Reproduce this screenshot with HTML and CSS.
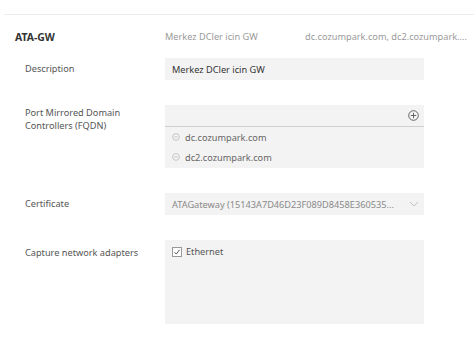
FILE: index.html
```html
<!DOCTYPE html>
<html lang="en">
<head>
<meta charset="UTF-8">
<title>Gateway settings</title>
<link rel="stylesheet" href="styles.css">
</head>
<body>

<div class="panel">
    <div class="summary">
        <div class="name">ATA-GW</div>
        <div class="desc">Merkez DCler icin GW</div>
        <div class="dcs">dc.cozumpark.com, dc2.cozumpark....</div>
    </div>

    <div class="form">
        <div class="row">
            <div class="label">Description</div>
            <div class="field">
                <div class="input">Merkez DCler icin GW</div>
            </div>
        </div>

        <div class="row">
            <div class="label label-top">Port Mirrored Domain<br>Controllers (FQDN)</div>
            <div class="field">
                <div class="input add">
                    <svg class="plus" width="11" height="11" viewBox="0 0 11 11">
                        <circle cx="5.5" cy="5.5" r="4.8" fill="none" stroke="#555" stroke-width="0.9"/>
                        <path d="M5.5 2.8v5.4M2.8 5.5h5.4" stroke="#555" stroke-width="0.9"/>
                    </svg>
                </div>
                <div class="list">
                    <div class="item">
                        <svg class="minus" width="8" height="8" viewBox="0 0 8 8">
                            <circle cx="4" cy="4" r="3.4" fill="none" stroke="#bbb" stroke-width="0.8"/>
                            <path d="M2.2 4h3.6" stroke="#bbb" stroke-width="0.8"/>
                        </svg>
                        dc.cozumpark.com
                    </div>
                    <div class="item">
                        <svg class="minus" width="8" height="8" viewBox="0 0 8 8">
                            <circle cx="4" cy="4" r="3.4" fill="none" stroke="#bbb" stroke-width="0.8"/>
                            <path d="M2.2 4h3.6" stroke="#bbb" stroke-width="0.8"/>
                        </svg>
                        dc2.cozumpark.com
                    </div>
                </div>
            </div>
        </div>

        <div class="row">
            <div class="label">Certificate</div>
            <div class="field">
                <div class="input select">
                    <span>ATAGateway (15143A7D46D23F089D8458E360535...</span>
                    <svg class="chev" width="10" height="6" viewBox="0 0 10 6">
                        <path d="M1 1l4 4 4-4" fill="none" stroke="#bbb" stroke-width="0.9"/>
                    </svg>
                </div>
            </div>
        </div>

        <div class="row">
            <div class="label label-check">Capture network adapters</div>
            <div class="field">
                <div class="adapters">
                    <label class="check">
                        <span class="box">
                            <svg width="8" height="8" viewBox="0 0 8 8">
                                <path d="M1.5 4.2l1.8 1.9 3.3-4.4" fill="none" stroke="#444" stroke-width="0.9"/>
                            </svg>
                        </span>
                        Ethernet
                    </label>
                </div>
            </div>
        </div>
    </div>
</div>

</body>
</html>
```

FILE: styles.css
```css
body {
    margin: 0;
    background: #fff;
    font-family: 'Noto Sans', sans-serif;
    font-size: 9.2px;
    color: #555;
    white-space: nowrap;
}

.panel {
    padding-top: 14px;
}

.summary {
    margin-left: 4px;
    border-top: 1px solid #ececec;
    height: 43px;
    display: flex;
    align-items: center;
}

.summary .name {
    width: 150px;
    flex-shrink: 0;
    padding-left: 11px;
    font-weight: bold;
    font-size: 10.4px;
    color: #333;
}

.summary .desc {
    width: 140px;
    flex-shrink: 0;
    color: #9a9a9a;
}

.summary .dcs {
    color: #9a9a9a;
}

.form {
    padding-left: 25px;
    display: flex;
    flex-direction: column;
    gap: 25px;
}

.row {
    display: flex;
}

.label {
    width: 140px;
    height: 22px;
    line-height: 22px;
}

.label-top {
    line-height: 13px;
    padding-top: 1px;
    height: auto;
}

.label-check {
    line-height: 13px;
    padding-top: 6px;
    height: auto;
}

.field {
    width: 259px;
}

.input {
    height: 22px;
    background: #f3f3f3;
    padding: 0 7px;
    display: flex;
    align-items: center;
    color: #333;
}

.add {
    justify-content: flex-end;
    border-bottom: 1px solid #cfcfcf;
    height: 21px;
    padding-right: 5px;
}

.list {
    background: #f3f3f3;
    padding: 0 0 2px 7px;
    height: 39px;
}

.item {
    height: 20px;
    display: flex;
    align-items: center;
    gap: 5px;
    color: #666;
}

.select {
    justify-content: space-between;
    color: #8a8a8a;
    padding-right: 5px;
    overflow: hidden;
}

.adapters {
    height: 84px;
    background: #f3f3f3;
    padding: 5px 7px;
    box-sizing: border-box;
}

.check {
    display: flex;
    align-items: center;
    gap: 4px;
    color: #555;
}

.box {
    width: 8px;
    height: 8px;
    border: 1px solid #999;
    background: #fff;
    display: flex;
}
```
